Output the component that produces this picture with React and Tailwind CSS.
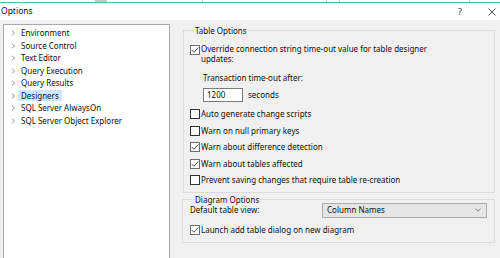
import React from 'react';

const treeItems = [
  'Environment',
  'Source Control',
  'Text Editor',
  'Query Execution',
  'Query Results',
  'Designers',
  'SQL Server AlwaysOn',
  'SQL Server Object Explorer',
];

const tableOptions = [
  { label: 'Auto generate change scripts', checked: false },
  { label: 'Warn on null primary keys', checked: false },
  { label: 'Warn about difference detection', checked: true },
  { label: 'Warn about tables affected', checked: true },
  { label: 'Prevent saving changes that require table re-creation', checked: false },
];

function Check({ checked }) {
  return (
    <span
      className={
        checked
          ? 'w-[10px] h-[10px] border border-[#6d6d6d] bg-white flex items-center justify-center shrink-0'
          : 'w-[10px] h-[10px] border border-[#333333] bg-white flex items-center justify-center shrink-0'
      }
    >
      {checked && (
        <svg width="8" height="8" viewBox="0 0 8 8">
          <path d="M0.8 4.1 L3 6.3 L7.3 1.4" fill="none" stroke="#3a3a3a" strokeWidth="0.9" />
        </svg>
      )}
    </span>
  );
}

function Chevron() {
  return (
    <svg width="5" height="6" viewBox="0 0 5 6" className="shrink-0">
      <path d="M1 0.8 L3.6 3 L1 5.2" fill="none" stroke="#8a8a8a" strokeWidth="0.9" />
    </svg>
  );
}

export default function App() {
  return (
    <div className="w-[500px] h-[258px] overflow-hidden bg-white font-['Noto_Sans',sans-serif] text-[8px] text-[#111]">
      {/* window behind */}
      <div className="h-[2px] flex bg-white">
        <div className="w-[95px]" />
        <div className="w-[12px] bg-[#c8c8c8]" />
        <div className="w-[96px] border-r border-[#c8c8c8]" />
        <div className="w-[124px] border-r border-[#c8c8c8]" />
        <div className="w-[13px] border-r border-[#c8c8c8]" />
        <div className="w-[130px] border-r border-[#c8c8c8]" />
      </div>
      <div className="h-px bg-[#5cb7a6]" />

      {/* title bar */}
      <div className="h-[17px] flex items-center bg-white">
        <span className="ml-[1px] text-[8.5px]">Options</span>
        <span className="ml-auto text-[9px] text-[#333]">?</span>
        <svg width="8" height="8" viewBox="0 0 8 8" className="ml-[26px] mr-[4px]">
          <path d="M0.5 0.5 L7.5 7.5 M7.5 0.5 L0.5 7.5" stroke="#222" strokeWidth="0.8" />
        </svg>
      </div>

      {/* body */}
      <div className="h-[238px] bg-[#f0f0f0] flex items-start">
        <div className="ml-[3px] mt-[4px] w-[167px] h-[240px] bg-white border border-[#a9a9a9] pt-[2px]">
          {treeItems.map((item) => (
            <div key={item} className="h-[12.5px] flex items-center leading-[10px]">
              <span className="ml-[7px]">
                <Chevron />
              </span>
              <span
                className={
                  item === 'Designers'
                    ? 'ml-[2px] px-[3px] h-[11px] flex items-center bg-[#cce8ff]'
                    : 'ml-[2px] px-[3px] h-[11px] flex items-center'
                }
              >
                {item}
              </span>
            </div>
          ))}
        </div>

        <div className="ml-[13px] mt-[5px] w-[312px] flex flex-col">
          <fieldset className="border border-[#dcdcdc] pl-[6px] pb-[3px]">
            <legend className="ml-[4px] px-[1px] leading-[11px]">Table Options</legend>
            <div className="flex items-start mt-[8px] leading-[10.4px]">
              <span className="mt-[1px]">
                <Check checked />
              </span>
              <span className="ml-[1px]">
                Override connection string time-out value for table designer
                <br />
                updates:
              </span>
            </div>
            <div className="ml-[13px] mt-[8px] leading-[10px]">Transaction time-out after:</div>
            <div className="ml-[13px] mt-[5px] flex items-center">
              <div className="w-[40px] h-[14px] bg-white border border-[#7a7a7a] flex items-center pl-[3px]">
                1200
              </div>
              <span className="ml-[5px]">seconds</span>
            </div>
            <div className="mt-[4px] flex flex-col">
              {tableOptions.map((o) => (
                <div key={o.label} className="h-[16.6px] flex items-center">
                  <Check checked={o.checked} />
                  <span className="ml-[1px]">{o.label}</span>
                </div>
              ))}
            </div>
          </fieldset>

          <fieldset className="mt-[2px] -ml-px border border-[#dcdcdc] pl-[7px] pr-[7px] pb-[4px]">
            <legend className="ml-[4px] px-[1px] leading-[10px]">Diagram Options</legend>
            <div className="-mt-[2px] flex items-center">
              <span>Default table view:</span>
              <div className="ml-auto w-[165px] h-[15.4px] bg-[#e5e5e5] border border-[#acacac] flex items-center pl-[4px] pr-[5px]">
                <span>Column Names</span>
                <svg width="6" height="4" viewBox="0 0 6 4" className="ml-auto">
                  <path d="M0.5 0.8 L3 3.2 L5.5 0.8" fill="none" stroke="#666" strokeWidth="0.8" />
                </svg>
              </div>
            </div>
            <div className="mt-[3.6px] h-[16px] flex items-center">
              <Check checked />
              <span className="ml-[1px]">Launch add table dialog on new diagram</span>
            </div>
          </fieldset>
        </div>
      </div>
    </div>
  );
}
